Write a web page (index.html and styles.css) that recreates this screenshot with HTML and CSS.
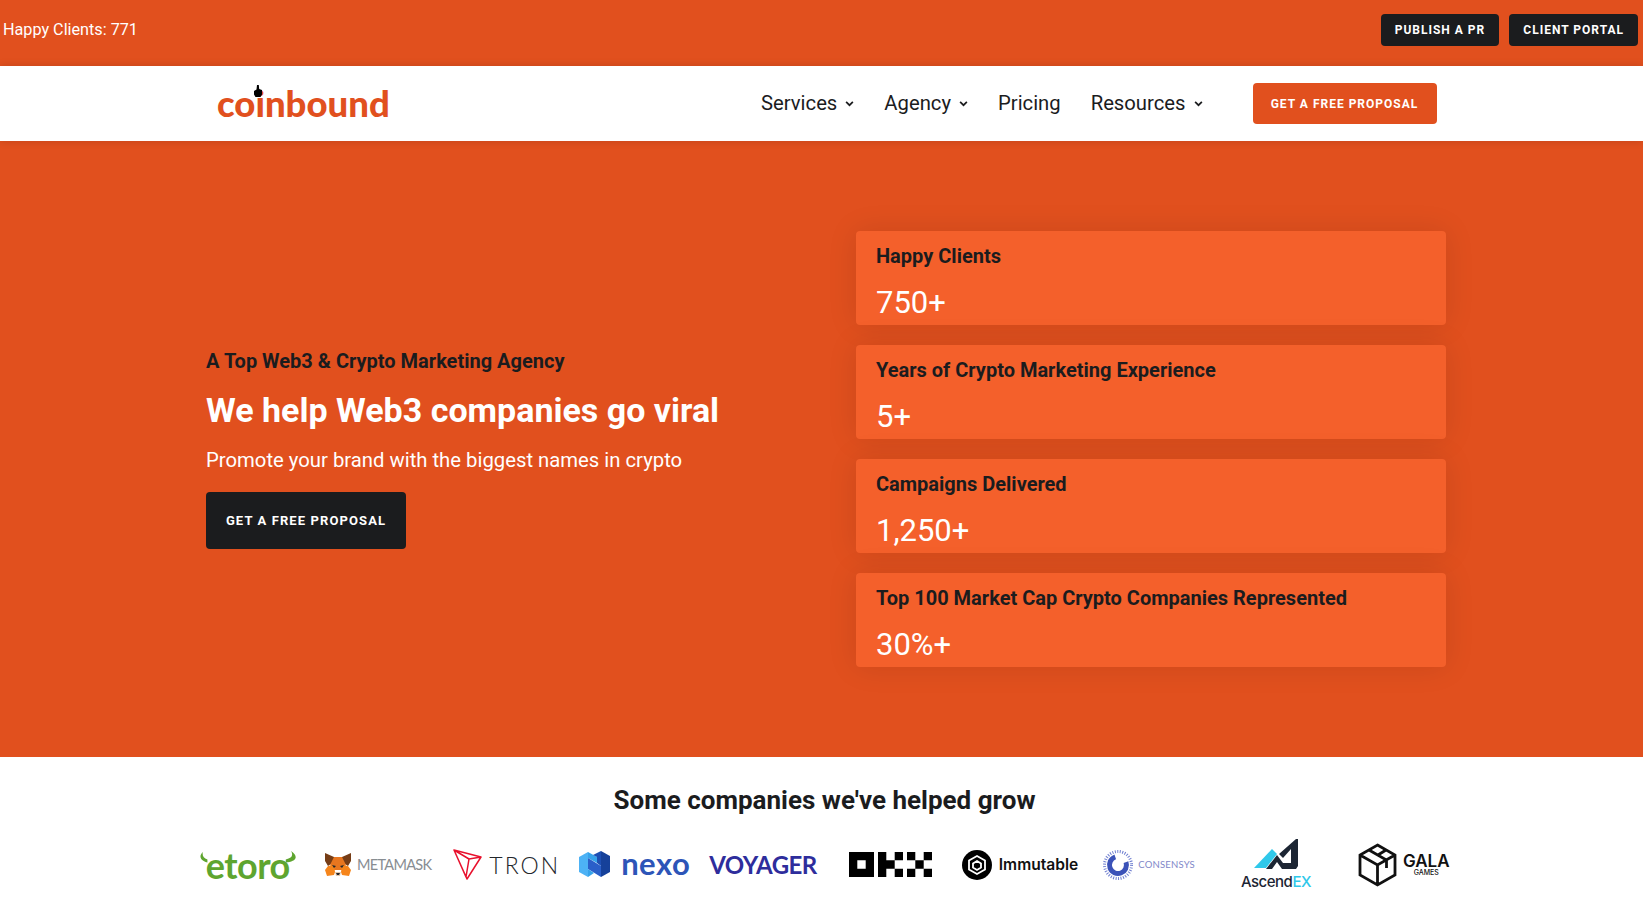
FILE: index.html
```html
<!DOCTYPE html>
<html lang="en">
<head>
    <meta charset="UTF-8">
    <meta name="viewport" content="width=device-width, initial-scale=1.0">
    <title>Coinbound</title>
    <link rel="stylesheet" href="styles.css">
</head>
<body>
    <div class="topbar">
        <span class="counter">Happy Clients: 771</span>
        <div class="topbar-links">
            <a class="btn btn-top" href="#">PUBLISH A PR</a>
            <a class="btn btn-top" href="#">CLIENT PORTAL</a>
        </div>
    </div>

    <nav class="nav">
        <a class="brand" href="#">
            <svg class="brand-hand" viewBox="0 0 10 12"><path d="M4 0h1.800l.4 4L9 5v4.500L7.500 12h-5L1 9.500V6l2.500-1.500z"/></svg>
            coinbound
        </a>
        <div class="nav-links">
            <a class="nav-link" href="#">Services <svg class="caret" viewBox="0 0 8 6"><path d="M1 1.500l3 3 3-3"/></svg></a>
            <a class="nav-link" href="#">Agency <svg class="caret" viewBox="0 0 8 6"><path d="M1 1.500l3 3 3-3"/></svg></a>
            <a class="nav-link" href="#">Pricing</a>
            <a class="nav-link" href="#">Resources <svg class="caret" viewBox="0 0 8 6"><path d="M1 1.500l3 3 3-3"/></svg></a>
        </div>
        <a class="btn btn-nav" href="#">GET A FREE PROPOSAL</a>
    </nav>

    <section class="hero">
        <div class="hero-copy">
            <h3 class="eyebrow">A Top Web3 &amp; Crypto Marketing Agency</h3>
            <h1 class="headline">We help Web3 companies go viral</h1>
            <p class="subline">Promote your brand with the biggest names in crypto</p>
            <a class="btn btn-hero" href="#">GET A FREE PROPOSAL</a>
        </div>
        <div class="stats">
            <div class="stat">
                <div class="stat-label">Happy Clients</div>
                <div class="stat-value">750+</div>
            </div>
            <div class="stat">
                <div class="stat-label">Years of Crypto Marketing Experience</div>
                <div class="stat-value">5+</div>
            </div>
            <div class="stat">
                <div class="stat-label">Campaigns Delivered</div>
                <div class="stat-value">1,250+</div>
            </div>
            <div class="stat">
                <div class="stat-label">Top 100 Market Cap Crypto Companies Represented</div>
                <div class="stat-value">30%+</div>
            </div>
        </div>
    </section>

    <section class="clients">
        <h2 class="clients-title">Some companies we've helped grow</h2>
        <div class="logos">
            <div class="logo logo-etoro">
                <svg class="horn-left" viewBox="0 0 14 16"><path d="M5 0C1 4-1 10 11 14l0-4C6 8 4 5 5 0z"/></svg>
                <span>etoro</span>
                <svg class="horn-right" viewBox="0 0 16 18"><path d="M8 0C11 6 9 9 1 11l0 4C12 14 20 9 8 0z"/></svg>
            </div>

            <div class="logo logo-metamask">
                <svg class="fox" viewBox="0 0 26 24">
                    <polygon fill="#763d16" points="0,0 9,4 9,9 3,13 0,8"/>
                    <polygon fill="#763d16" points="26,0 17,4 17,9 23,13 26,8"/>
                    <polygon fill="#e8761f" points="9,4 17,4 21,12 17,17 9,17 5,12"/>
                    <polygon fill="#f6851b" points="3,13 9,12 10,19 9,22 2,23 0,17"/>
                    <polygon fill="#f6851b" points="23,13 17,12 16,19 17,22 24,23 26,17"/>
                    <polygon fill="#23262b" points="7,12 11,13 9,15"/>
                    <polygon fill="#23262b" points="19,12 15,13 17,15"/>
                    <polygon fill="#e2c7ae" points="10,19 16,19 15,23 11,23"/>
                    <polygon fill="#23262b" points="11,20 15,20 14,22 12,22"/>
                </svg>
                <span>METAMASK</span>
            </div>

            <div class="logo logo-tron">
                <svg class="tron-mark" viewBox="0 0 30 31"><path d="M1 1l27 7L14 30zM1 1l12 27 3-18zM1 1l15 9 12-2" fill="none" stroke="#e8112d" stroke-width="1.500" stroke-linejoin="round"/></svg>
                <span>TRON</span>
            </div>

            <div class="logo logo-nexo">
                <svg class="nexo-mark" viewBox="0 0 31 27">
                    <polygon fill="#4db2f5" points="0,6 9,1 9,26 0,21"/>
                    <polygon fill="#36a3ea" points="9,1 18,6 18,12 9,7"/>
                    <polygon fill="#16419a" points="22,0 31,5 31,21 22,26"/>
                    <polygon fill="#1d4fb3" points="22,0 14,4 18,6 18,12 22,15"/>
                    <polygon fill="#2a5fc9" points="9,7 22,15 22,26 9,18"/>
                    <polygon fill="#36a3ea" points="9,18 15,22 9,26"/>
                </svg>
                <span>nexo</span>
            </div>

            <div class="logo logo-voyager"><span>VOYAGER</span></div>

            <div class="logo logo-okx">
                <svg class="okx-mark" viewBox="0 0 84 25">
                    <path fill-rule="evenodd" d="M0 0h25v25H0zM8.300 8.300v8.400h8.400V8.300z"/>
                    <path d="M29 0h8.300v8.300H29zM45.700 0H54v8.300h-8.300zM37.300 8.300h8.400v8.400h-8.400zM29 8.300h8.300v8.400H29zM29 16.700h8.300V25H29zM45.700 16.700H54V25h-8.300z"/>
                    <path d="M58 0h8.300v8.300H58zM74.700 0H83v8.300h-8.300zM66.300 8.300h8.400v8.400h-8.400zM58 16.700h8.300V25H58zM74.700 16.700H83V25h-8.300z"/>
                </svg>
            </div>

            <div class="logo logo-immutable">
                <svg class="immutable-mark" viewBox="0 0 30 30">
                    <circle cx="15" cy="15" r="15"/>
                    <path d="M15 6l8 4.500v9L15 24l-8-4.500v-9zM15 11l4 2.500v4L15 20l-4-2.500v-4z" fill="none" stroke="#fff" stroke-width="1.800"/>
                </svg>
                <span>Immutable</span>
            </div>

            <div class="logo logo-consensys">
                <svg class="consensys-mark" viewBox="0 0 30 32">
                    <circle cx="15" cy="16" r="13.500" fill="none" stroke="#6f7fd0" stroke-width="3" stroke-dasharray="1 1.500"/>
                    <circle cx="15" cy="16" r="8.500" fill="none" stroke="#3b52b8" stroke-width="5" stroke-dasharray="40 13.400" transform="rotate(-20 15 16)"/>
                </svg>
                <span>CONSENSYS</span>
            </div>

            <div class="logo logo-ascendex">
                <svg class="ascendex-mark" viewBox="0 0 44 30">
                    <polygon fill="#2fc8ea" points="0,29 18,10 23,15 12,29"/>
                    <path fill="#1c2533" d="M42 0h2v27l-2 3H28l-5-7-5 7h-6l11-14 6 8h8V10l-8 9-4-4z"/>
                </svg>
                <span>Ascend<em>EX</em></span>
            </div>

            <div class="logo logo-gala">
                <svg class="gala-mark" viewBox="0 0 39 44">
                    <path d="M19.500 2L37 12v20L19.500 42 2 32V12zM2 12l17.500 10L37 12M19.500 22v20M11 7l17.500 10v8M28 7L20 12" fill="none" stroke="#111" stroke-width="2.800"/>
                </svg>
                <div class="gala-text">
                    <span class="gala-name">GALA</span>
                    <span class="gala-sub">GAMES</span>
                </div>
            </div>
        </div>
    </section>
</body>
</html>
```

FILE: styles.css
```css
* {
    box-sizing: border-box;
}
body {
    font-family: Roboto, Arial, sans-serif;
    margin: 0;
    padding: 0;
    background-color: white;
    color: #1b1c1e;
    overflow-x: hidden;
}
a {
    text-decoration: none;
    color: inherit;
}
.btn {
    display: flex;
    align-items: center;
    justify-content: center;
    font-weight: 700;
    color: white;
    border-radius: 4px;
}

/* top bar */
.topbar {
    display: flex;
    justify-content: space-between;
    align-items: center;
    height: 66px;
    padding: 0 5px 8px 3px;
    background-color: #e1501e;
}
.counter {
    color: white;
    font-size: 16.200px;
}
.topbar-links {
    display: flex;
    gap: 10px;
    margin-top: 2px;
}
.btn-top {
    height: 32px;
    padding: 0 14px;
    background-color: #1b1c1e;
    font-size: 12px;
    letter-spacing: 1px;
}

/* nav */
.nav {
    position: relative;
    display: flex;
    align-items: center;
    height: 75px;
    padding-left: 217px;
    background-color: white;
    box-shadow: 0 0 8px rgba(0, 0, 0, 0.15);
}
.brand {
    position: relative;
    width: 172px;
    margin-top: -1px;
    font-family: Lato, sans-serif;
    font-size: 36.500px;
    line-height: 38px;
    font-weight: 900;
    color: #e1501e;
    white-space: nowrap;
}
.brand-hand {
    position: absolute;
    left: 36px;
    top: 1px;
    width: 10px;
    height: 12px;
}
.nav-links {
    display: flex;
    gap: 30px;
    margin-left: 372px;
    margin-top: -1px;
}
.nav-link {
    display: flex;
    align-items: center;
    gap: 8px;
    font-size: 20.250px;
    color: #1b1c1e;
}
.caret {
    width: 9px;
    height: 7px;
    fill: none;
    stroke: #1b1c1e;
    stroke-width: 1.500;
}
.btn-nav {
    width: 184px;
    height: 41px;
    margin-left: 50px;
    background-color: #e1501e;
    font-size: 12px;
    letter-spacing: 1px;
}

/* hero */
.hero {
    display: flex;
    align-items: center;
    justify-content: space-between;
    height: 616px;
    padding: 0 197px 0 206px;
    background-color: #e1501e;
}
.hero-copy {
    margin-top: -1px;
}
.eyebrow {
    margin: 0;
    font-size: 20px;
    line-height: 26px;
    font-weight: 700;
    color: #1b1c1e;
}
.headline {
    margin: 13px 0 0;
    font-size: 34px;
    line-height: 46px;
    font-weight: 700;
    color: white;
}
.subline {
    margin: 13px 0 0;
    font-size: 20.300px;
    line-height: 28px;
    color: white;
}
.btn-hero {
    width: 200px;
    height: 57px;
    margin-top: 18px;
    background-color: #1b1c1e;
    font-size: 13px;
    letter-spacing: 1.100px;
}
.stats {
    display: flex;
    flex-direction: column;
    gap: 20px;
    width: 590px;
}
.stat {
    height: 94px;
    padding: 12px 20px 0;
    background-color: #f4602b;
    border-radius: 4px;
    box-shadow: 0 0 30px rgba(0, 0, 0, 0.1);
}
.stat-label {
    font-size: 20px;
    line-height: 26px;
    font-weight: 700;
    color: #1b1c1e;
}
.stat-value {
    margin-top: 13px;
    font-size: 31px;
    line-height: 42px;
    color: white;
}

/* client logos */
.clients {
    height: 150px;
    padding-top: 25px;
}
.clients-title {
    margin: 0;
    padding-left: 6px;
    font-size: 26px;
    line-height: 36px;
    font-weight: 700;
    text-align: center;
    color: #1b1c1e;
}
.logos {
    display: flex;
    align-items: center;
    height: 49px;
    margin-top: 22px;
    padding-left: 199px;
}
.logo {
    display: flex;
    align-items: center;
    flex: none;
}
.logo-etoro {
    width: 98px;
    font-family: Lato, sans-serif;
    font-size: 36px;
    font-weight: 700;
    color: #5ea52f;
}
.logo-etoro span {
    line-height: 30px;
    letter-spacing: -0.500px;
}
.horn-left {
    width: 14px;
    height: 16px;
    margin-right: -4px;
    margin-top: -14px;
    fill: #5ea52f;
}
.horn-right {
    width: 16px;
    height: 18px;
    margin-left: -5px;
    margin-top: -14px;
    fill: #5ea52f;
}
.logo-metamask {
    gap: 6px;
    margin-left: 28px;
    font-family: Lato, sans-serif;
    font-size: 14.500px;
    letter-spacing: -0.700px;
    color: #888d92;
}
.fox {
    width: 26px;
    height: 24px;
}
.logo-tron {
    gap: 6px;
    margin-left: 22px;
    font-family: Lato, sans-serif;
    font-size: 23px;
    font-weight: 300;
    letter-spacing: 2px;
    color: #23262b;
}
.tron-mark {
    width: 30px;
    height: 31px;
}
.logo-nexo {
    gap: 11px;
    margin-left: 19px;
    font-family: Lato, sans-serif;
    font-size: 31px;
    font-weight: 700;
    letter-spacing: 0.500px;
    color: #2d55b8;
}
.logo-nexo span {
    margin-top: -4px;
}
.nexo-mark {
    width: 31px;
    height: 27px;
}
.logo-voyager {
    margin-left: 19px;
    font-family: Lato, sans-serif;
    font-size: 24px;
    font-weight: 700;
    letter-spacing: -0.500px;
    color: #2e2d9c;
}
.logo-okx {
    margin-left: 32px;
}
.okx-mark {
    width: 84px;
    height: 25px;
}
.logo-immutable {
    gap: 7px;
    margin-left: 29px;
    font-family: Inter, sans-serif;
    font-size: 15.600px;
    font-weight: 600;
    color: #111;
}
.immutable-mark {
    width: 30px;
    height: 30px;
}
.logo-consensys {
    gap: 5px;
    margin-left: 25px;
    font-family: Lato, sans-serif;
    font-size: 9.500px;
    letter-spacing: 0.200px;
    color: #7f87c9;
}
.consensys-mark {
    width: 30px;
    height: 32px;
}
.logo-ascendex {
    flex-direction: column;
    gap: 5px;
    margin-left: 46px;
    font-family: Inter, sans-serif;
    font-size: 15px;
    font-weight: 500;
    line-height: 16px;
    letter-spacing: -0.500px;
    color: #1c2533;
}
.logo-ascendex em {
    font-style: normal;
    color: #2fc8ea;
}
.ascendex-mark {
    width: 44px;
    height: 30px;
}
.logo-gala {
    gap: 6px;
    margin-left: 47px;
    color: #111;
    font-family: Inter, sans-serif;
}
.gala-mark {
    width: 39px;
    height: 44px;
}
.gala-text {
    display: flex;
    flex-direction: column;
    align-items: center;
}
.gala-name {
    font-size: 17px;
    line-height: 16px;
    font-weight: 600;
}
.gala-sub {
    font-size: 7px;
    line-height: 8px;
    font-weight: 500;
}
```
